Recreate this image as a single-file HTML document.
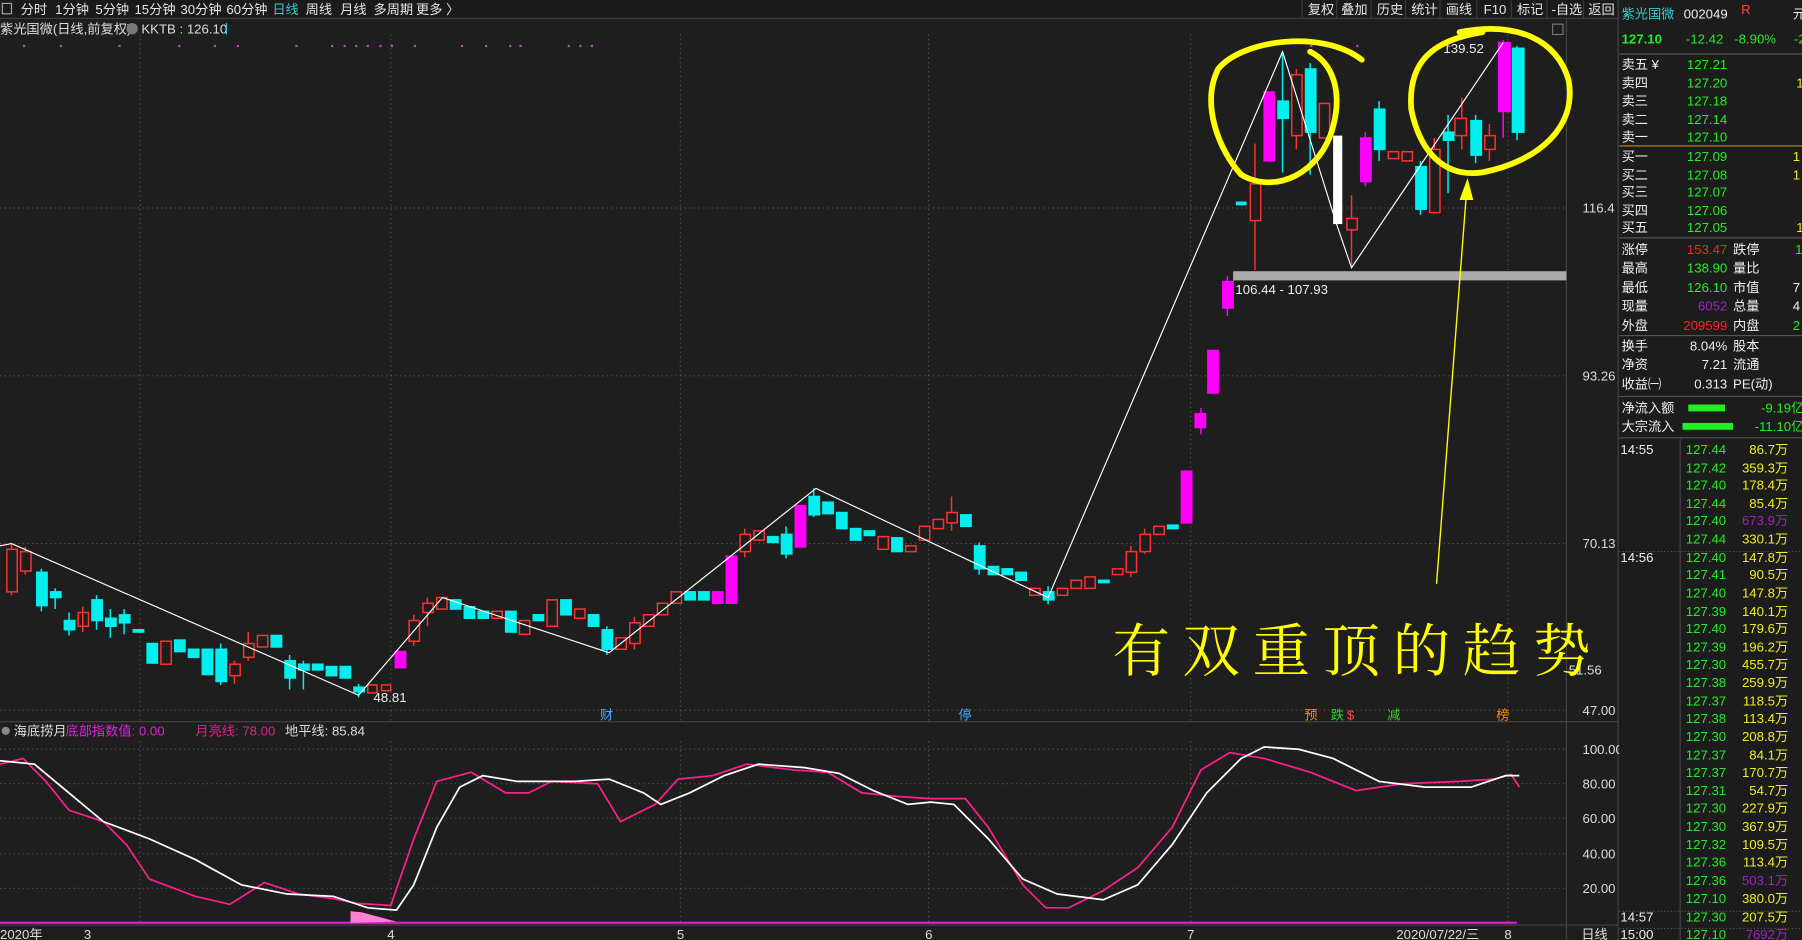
<!DOCTYPE html>
<html><head><meta charset="utf-8"><style>
html,body{margin:0;padding:0;background:#1e1e1e;overflow:hidden}
svg{display:block}
text{font-family:"Liberation Sans","Noto Sans CJK SC",sans-serif;font-size:11.5px}
</style></head><body>
<svg width="1802" height="940" viewBox="0 0 1568 818" preserveAspectRatio="none" xmlns="http://www.w3.org/2000/svg">
<rect width="1568" height="818" fill="#1e1e1e"/>
<!-- top bar -->
<rect x="0" y="0" width="1408" height="16" fill="#1a1a1a"/>
<line x1="0" y1="16" x2="1408" y2="16" stroke="#3a3a3a"/>
<rect x="2" y="3" width="8" height="9" fill="none" stroke="#aaa"/>
<g fill="#e6e6e6">
<text x="18" y="12">分时</text><text x="48" y="12">1分钟</text><text x="83" y="12">5分钟</text><text x="117" y="12">15分钟</text><text x="157" y="12">30分钟</text><text x="197" y="12">60分钟</text>
<text x="237" y="12" fill="#3cc">日线</text><text x="266" y="12">周线</text><text x="296" y="12">月线</text><text x="325" y="12">多周期</text><text x="362" y="12">更多 〉</text>
<text x="1138" y="12">复权</text><text x="1167" y="12">叠加</text><text x="1198" y="12">历史</text><text x="1228" y="12">统计</text><text x="1258" y="12">画线</text><text x="1291" y="12">F10</text><text x="1320" y="12">标记</text><text x="1350" y="12">-自选</text><text x="1382" y="12">返回</text>
</g>
<g stroke="#3a3a3a"><line x1="1133" y1="0" x2="1133" y2="16"/><line x1="1163" y1="0" x2="1163" y2="16"/><line x1="1193" y1="0" x2="1193" y2="16"/><line x1="1223" y1="0" x2="1223" y2="16"/><line x1="1253" y1="0" x2="1253" y2="16"/><line x1="1285" y1="0" x2="1285" y2="16"/><line x1="1315" y1="0" x2="1315" y2="16"/><line x1="1346" y1="0" x2="1346" y2="16"/><line x1="1378" y1="0" x2="1378" y2="16"/></g>
<text x="0" y="29" fill="#ddd">紫光国微(日线,前复权)</text>
<circle cx="115" cy="25" r="5" fill="#777"/>
<text x="123" y="29" fill="#ddd">KKTB : 126.10</text>
<line x1="197" y1="20" x2="197" y2="30" stroke="#3cc"/>
<g fill="#c040c0"><rect x="20" y="39" width="2" height="2"/><rect x="52" y="39" width="2" height="2"/><rect x="103" y="39" width="2" height="2"/><rect x="155" y="39" width="2" height="2"/><rect x="186" y="39" width="2" height="2"/><rect x="206" y="39" width="2" height="2"/><rect x="257" y="39" width="2" height="2"/><rect x="288" y="39" width="2" height="2"/><rect x="299" y="39" width="2" height="2"/><rect x="309" y="39" width="2" height="2"/><rect x="319" y="39" width="2" height="2"/><rect x="330" y="39" width="2" height="2"/><rect x="340" y="39" width="2" height="2"/><rect x="360" y="39" width="2" height="2"/><rect x="401" y="39" width="2" height="2"/><rect x="422" y="39" width="2" height="2"/><rect x="443" y="39" width="2" height="2"/><rect x="452" y="39" width="2" height="2"/><rect x="494" y="39" width="2" height="2"/><rect x="504" y="39" width="2" height="2"/><rect x="514" y="39" width="2" height="2"/><rect x="1140" y="39" width="2" height="2"/><rect x="1180" y="39" width="2" height="2"/><rect x="1260" y="39" width="2" height="2"/></g>
<!-- grid -->
<g stroke="#555" stroke-dasharray="1,3">
<line x1="0" y1="181" x2="1363" y2="181"/><line x1="0" y1="327" x2="1363" y2="327"/><line x1="0" y1="473" x2="1363" y2="473"/><line x1="0" y1="618" x2="1363" y2="618"/>
<line x1="122" y1="30" x2="122" y2="628"/><line x1="340" y1="30" x2="340" y2="628"/><line x1="592" y1="30" x2="592" y2="628"/><line x1="808" y1="30" x2="808" y2="628"/><line x1="1036" y1="30" x2="1036" y2="628"/><line x1="1312" y1="30" x2="1312" y2="628"/>
<line x1="0" y1="652" x2="1363" y2="652"/><line x1="0" y1="682" x2="1363" y2="682"/><line x1="0" y1="712" x2="1363" y2="712"/><line x1="0" y1="743" x2="1363" y2="743"/><line x1="0" y1="773" x2="1363" y2="773"/>
<line x1="122" y1="645" x2="122" y2="805"/><line x1="340" y1="645" x2="340" y2="805"/><line x1="592" y1="645" x2="592" y2="805"/><line x1="808" y1="645" x2="808" y2="805"/><line x1="1036" y1="645" x2="1036" y2="805"/><line x1="1312" y1="645" x2="1312" y2="805"/>
</g>
<line x1="1363" y1="16" x2="1363" y2="818" stroke="#444"/>
<line x1="0" y1="628" x2="1408" y2="628" stroke="#444"/>
<line x1="0" y1="805" x2="1408" y2="805" stroke="#444"/>
<line x1="1408" y1="0" x2="1408" y2="818" stroke="#444"/>
<rect x="1351" y="21" width="9" height="9" fill="none" stroke="#777"/>
<g fill="#ddd"><text x="1377" y="185">116.4</text><text x="1377" y="331">93.26</text><text x="1377" y="477">70.13</text><text x="1365" y="587">51.56</text><text x="1377" y="622">47.00</text>
<text x="1377" y="656">100.00</text><text x="1377" y="686">80.00</text><text x="1377" y="716">60.00</text><text x="1377" y="747">40.00</text><text x="1377" y="777">20.00</text></g>
<!-- candles -->
<g id="c" stroke-width="1.3">
<g stroke="#ff3030" fill="#1e1e1e">
<line x1="10" y1="473" x2="10" y2="518"/><rect x="6" y="478" width="9" height="37"/>
<line x1="22" y1="476" x2="22" y2="500"/><rect x="18" y="480" width="9" height="17"/>
<rect x="68" y="533" width="9" height="12"/><line x1="72" y1="528" x2="72" y2="550"/>
<rect x="140" y="558" width="9" height="20"/>
<line x1="204" y1="575" x2="204" y2="595"/><rect x="200" y="578" width="9" height="10"/>
<line x1="216" y1="550" x2="216" y2="575"/><rect x="212" y="560" width="9" height="12"/>
<rect x="224" y="553" width="9" height="10"/>
<rect x="320" y="596" width="8" height="7"/><rect x="332" y="596" width="8" height="5"/>
<line x1="360" y1="535" x2="360" y2="562"/><rect x="356" y="540" width="9" height="18"/>
<line x1="372" y1="520" x2="372" y2="545"/><rect x="368" y="525" width="9" height="8"/>
<rect x="380" y="520" width="9" height="10"/>
<rect x="428" y="532" width="9" height="6"/><rect x="452" y="540" width="9" height="12"/>
<rect x="476" y="522" width="9" height="23"/><rect x="500" y="530" width="9" height="8"/>
<rect x="536" y="555" width="9" height="10"/><line x1="552" y1="537" x2="552" y2="565"/><rect x="548" y="542" width="9" height="18"/>
<rect x="560" y="535" width="9" height="10"/><rect x="572" y="525" width="9" height="10"/><rect x="584" y="515" width="9" height="10"/>
<line x1="648" y1="460" x2="648" y2="485"/><rect x="644" y="465" width="9" height="15"/><rect x="656" y="462" width="9" height="8"/>
<rect x="764" y="467" width="9" height="11"/><rect x="788" y="475" width="9" height="5"/>
<rect x="800" y="458" width="9" height="12"/><rect x="812" y="452" width="9" height="8"/>
<line x1="828" y1="432" x2="828" y2="462"/><rect x="824" y="446" width="9" height="9"/>
<rect x="896" y="512" width="9" height="6"/><rect x="920" y="512" width="9" height="6"/><rect x="932" y="505" width="9" height="7"/><rect x="944" y="502" width="9" height="10"/>
<rect x="968" y="495" width="9" height="5"/><line x1="984" y1="475" x2="984" y2="502"/><rect x="980" y="480" width="9" height="18"/>
<line x1="996" y1="460" x2="996" y2="482"/><rect x="992" y="465" width="9" height="15"/><rect x="1004" y="458" width="9" height="7"/>
<line x1="1092" y1="125" x2="1092" y2="235"/><rect x="1088" y="160" width="9" height="32"/>
<line x1="1128" y1="60" x2="1128" y2="130"/><rect x="1124" y="65" width="9" height="53"/>
<rect x="1148" y="90" width="9" height="30"/>
<line x1="1176" y1="170" x2="1176" y2="232"/><rect x="1172" y="190" width="9" height="10"/>
<rect x="1208" y="132" width="9" height="6"/><rect x="1220" y="132" width="9" height="8"/>
<line x1="1248" y1="120" x2="1248" y2="186"/><rect x="1244" y="130" width="9" height="55"/>
<line x1="1272" y1="85" x2="1272" y2="130"/><rect x="1266" y="103" width="10" height="15"/>
<line x1="1296" y1="108" x2="1296" y2="140"/><rect x="1292" y="118" width="9" height="12"/>
</g>
<g stroke="#00f0f0" fill="#00f0f0">
<line x1="36" y1="495" x2="36" y2="532"/><rect x="32" y="498" width="9" height="29"/>
<line x1="48" y1="512" x2="48" y2="530"/><rect x="44" y="515" width="9" height="5"/>
<line x1="60" y1="533" x2="60" y2="553"/><rect x="56" y="540" width="9" height="8"/>
<line x1="84" y1="518" x2="84" y2="548"/><rect x="80" y="522" width="9" height="18"/>
<line x1="96" y1="530" x2="96" y2="555"/><rect x="92" y="538" width="9" height="7"/>
<line x1="108" y1="530" x2="108" y2="552"/><rect x="104" y="535" width="9" height="7"/>
<rect x="116" y="548" width="9" height="2"/>
<rect x="128" y="560" width="9" height="17"/><rect x="152" y="557" width="9" height="10"/><rect x="164" y="565" width="9" height="7"/>
<rect x="176" y="565" width="9" height="22"/><line x1="192" y1="560" x2="192" y2="596"/><rect x="188" y="565" width="9" height="28"/>
<rect x="236" y="553" width="9" height="10"/><line x1="252" y1="570" x2="252" y2="600"/><rect x="248" y="575" width="9" height="15"/>
<line x1="264" y1="575" x2="264" y2="600"/><rect x="260" y="578" width="9" height="5"/><rect x="272" y="578" width="9" height="5"/><rect x="284" y="580" width="9" height="8"/><rect x="296" y="580" width="9" height="10"/>
<line x1="312" y1="595" x2="312" y2="607"/><rect x="308" y="598" width="9" height="4"/>
<rect x="392" y="522" width="9" height="8"/><rect x="404" y="528" width="9" height="10"/><rect x="416" y="532" width="9" height="6"/>
<rect x="440" y="532" width="9" height="18"/><rect x="464" y="535" width="9" height="5"/><rect x="488" y="522" width="9" height="13"/>
<rect x="512" y="535" width="9" height="10"/><line x1="528" y1="545" x2="528" y2="570"/><rect x="524" y="548" width="9" height="17"/>
<rect x="596" y="515" width="9" height="7"/><rect x="608" y="515" width="9" height="7"/>
<rect x="668" y="467" width="9" height="5"/><line x1="684" y1="458" x2="684" y2="486"/><rect x="680" y="465" width="9" height="17"/>
<line x1="708" y1="425" x2="708" y2="450"/><rect x="704" y="432" width="9" height="16"/><rect x="716" y="437" width="9" height="10"/><rect x="728" y="446" width="9" height="14"/>
<rect x="740" y="460" width="9" height="10"/><rect x="752" y="462" width="9" height="4"/><rect x="776" y="468" width="9" height="12"/>
<rect x="836" y="448" width="9" height="10"/><line x1="852" y1="472" x2="852" y2="500"/><rect x="848" y="475" width="9" height="20"/>
<rect x="860" y="493" width="9" height="7"/><rect x="872" y="495" width="9" height="5"/><rect x="884" y="498" width="9" height="7"/>
<line x1="912" y1="510" x2="912" y2="526"/><rect x="908" y="515" width="9" height="7"/><rect x="956" y="505" width="9" height="2"/><rect x="1016" y="457" width="9" height="3"/>
<rect x="1076" y="176" width="8" height="2"/>
<line x1="1116" y1="45" x2="1116" y2="150"/><rect x="1112" y="88" width="9" height="15"/>
<line x1="1140" y1="55" x2="1140" y2="152"/><rect x="1136" y="60" width="9" height="55"/>
<line x1="1200" y1="88" x2="1200" y2="140"/><rect x="1196" y="95" width="9" height="35"/>
<line x1="1236" y1="140" x2="1236" y2="187"/><rect x="1232" y="145" width="9" height="37"/>
<line x1="1260" y1="100" x2="1260" y2="168"/><rect x="1256" y="115" width="9" height="7"/>
<line x1="1284" y1="100" x2="1284" y2="142"/><rect x="1280" y="105" width="9" height="30"/>
<line x1="1320" y1="40" x2="1320" y2="122"/><rect x="1316" y="42" width="10" height="73"/>
</g>
<g stroke="#ff00ff" fill="#ff00ff">
<rect x="344" y="567" width="9" height="14"/><rect x="620" y="515" width="9" height="10"/><rect x="632" y="484" width="9" height="41"/>
<rect x="692" y="440" width="9" height="36"/><rect x="1028" y="410" width="9" height="45"/>
<line x1="1045" y1="355" x2="1045" y2="378"/><rect x="1040" y="360" width="9" height="12"/>
<rect x="1051" y="305" width="9" height="37"/><line x1="1068" y1="240" x2="1068" y2="275"/><rect x="1064" y="245" width="9" height="23"/>
<rect x="1100" y="80" width="9" height="60"/><line x1="1188" y1="115" x2="1188" y2="162"/><rect x="1184" y="120" width="9" height="38"/>
<line x1="1308" y1="35" x2="1308" y2="120"/><rect x="1304" y="37" width="10" height="60"/>
</g>
<rect x="1160" y="118" width="8" height="77" fill="#fff"/>
</g>
<!-- trend lines -->
<polyline fill="none" stroke="#fff" stroke-width="1" points="0,475 10,473 312,605 385,520 530,568 710,425 912,520 1116,45 1163,195 1176,233 1308,37"/>
<rect x="1073" y="236" width="290" height="8" fill="#aaa"/>
<g fill="#eee"><text x="1075" y="256" font-size="11">106.44 - 107.93</text><text x="1256" y="46" font-size="11">139.52</text><text x="325" y="611" font-size="11">48.81</text></g>
<g font-size="11"><text x="1135" y="626" fill="#f80">预</text><text x="1158" y="626" fill="#3c3">跌</text><text x="1172" y="626" fill="#f44" font-size="8">$</text><text x="1207" y="626" fill="#3c3">减</text><text x="1302" y="626" fill="#f80">榜</text><text x="522" y="626" fill="#4af">财</text><text x="834" y="626" fill="#4af">停</text></g>
<!-- yellow annotations -->
<path d="M1185,52 C1150,25 1080,35 1060,60 C1045,90 1060,130 1080,152 C1110,170 1150,150 1160,110 C1168,80 1160,55 1140,45" fill="none" stroke="#ffff00" stroke-width="5" stroke-linecap="round"/>
<path d="M1270,28 C1320,18 1355,35 1365,70 C1372,110 1340,140 1290,150 C1255,155 1235,130 1228,95 C1225,55 1245,35 1290,28" fill="none" stroke="#ffff00" stroke-width="5" stroke-linecap="round"/>
<line x1="1250" y1="508" x2="1276" y2="168" stroke="#ffff00" stroke-width="1.2"/>
<polygon points="1277,155 1270,174 1282,174" fill="#ffff00"/>
<text x="968" y="584" fill="#ffff00" font-size="50" letter-spacing="11" style="font-family:'Noto Serif CJK SC',serif;font-size:50px">有双重顶的趋势</text>
<!-- indicator -->
<g font-size="10.5"><text x="12" y="640" fill="#ddd">海底捞月</text><text x="57" y="640" fill="#e020e0">底部指数值: 0.00</text><text x="170" y="640" fill="#e0208a">月亮线: 78.00</text><text x="248" y="640" fill="#ddd">地平线: 85.84</text></g>
<circle cx="5" cy="636" r="3.5" fill="#888"/>
<polyline fill="none" stroke="#ff1e8c" stroke-width="1.5" points="0,665 20,660 40,680 60,705 90,715 110,735 130,765 170,780 200,787 230,768 260,778 290,782 310,786 340,788 360,730 380,680 410,672 440,690 460,690 480,680 520,682 540,715 570,700 590,678 620,675 650,665 690,670 720,672 750,690 780,693 810,695 840,695 860,720 890,770 910,790 930,790 960,775 990,755 1020,720 1045,670 1070,655 1100,660 1140,672 1180,688 1220,682 1270,680 1300,678 1315,674 1322,685"/>
<polyline fill="none" stroke="#fff" stroke-width="1.5" points="0,662 30,665 60,690 90,715 130,730 170,748 210,770 250,778 290,780 320,790 345,792 360,770 380,720 400,685 420,675 450,680 500,680 530,678 560,690 575,700 600,690 630,675 660,665 700,668 730,673 760,688 790,700 810,698 830,700 860,730 890,765 920,778 960,783 990,770 1020,735 1050,690 1080,660 1100,650 1130,652 1160,660 1200,680 1240,685 1280,685 1310,675 1322,675"/>
<line x1="0" y1="803" x2="1320" y2="803" stroke="#d020d0" stroke-width="2"/>
<path d="M305,803 L305,793 L315,794 L330,798 L345,802 Z" fill="#ff80d0"/>
<g fill="#ddd" font-size="10.5"><text x="0" y="817">2020年</text><text x="73" y="817">3</text><text x="337" y="817">4</text><text x="589" y="817">5</text><text x="805" y="817">6</text><text x="1033" y="817">7</text><text x="1215" y="817">2020/07/22/三</text><text x="1309" y="817">8</text><text x="1376" y="817">日线</text></g>
<!-- right panel -->
<rect x="1409" y="0" width="159" height="818" fill="#1c1c1c"/>
<text x="1411" y="16" fill="#3cc" font-size="13">紫光国微</text><text x="1465" y="16" fill="#eee" font-size="13">002049</text><text x="1515" y="12" fill="#f44" font-size="8">R</text><text x="1560" y="16" fill="#eee" font-size="13">元</text>
<text x="1411" y="38" fill="#22ee22" font-size="15" font-weight="bold">127.10</text><text x="1467" y="38" fill="#22ee22" font-size="13">-12.42</text><text x="1509" y="38" fill="#22ee22" font-size="13">-8.90%</text><text x="1561" y="38" fill="#22ee22" font-size="13">-2</text>
<g stroke="#555"><line x1="1409" y1="47" x2="1568" y2="47"/><line x1="1409" y1="207" x2="1568" y2="207"/><line x1="1409" y1="292" x2="1568" y2="292"/><line x1="1409" y1="345" x2="1568" y2="345"/><line x1="1409" y1="381" x2="1568" y2="381"/></g>
<line x1="1409" y1="127" x2="1568" y2="127" stroke="#c80"/>
<g fill="#eee"><text x="1411" y="60">卖五 ¥</text><text x="1411" y="76">卖四</text><text x="1411" y="92">卖三</text><text x="1411" y="108">卖二</text><text x="1411" y="123">卖一</text>
<text x="1411" y="140">买一</text><text x="1411" y="156">买二</text><text x="1411" y="171">买三</text><text x="1411" y="187">买四</text><text x="1411" y="202">买五</text>
<text x="1411" y="221">涨停</text><text x="1411" y="237">最高</text><text x="1411" y="254">最低</text><text x="1411" y="270">现量</text><text x="1411" y="287">外盘</text>
<text x="1508" y="221">跌停</text><text x="1508" y="237">量比</text><text x="1508" y="254">市值</text><text x="1508" y="270">总量</text><text x="1508" y="287">内盘</text>
<text x="1411" y="305">换手</text><text x="1411" y="321">净资</text><text x="1411" y="338">收益㈠</text><text x="1508" y="305">股本</text><text x="1508" y="321">流通</text><text x="1508" y="338">PE(动)</text>
<text x="1411" y="359">净流入额</text><text x="1411" y="375">大宗流入</text></g>
<g fill="#22ee22" text-anchor="end"><text x="1503" y="60">127.21</text><text x="1503" y="76">127.20</text><text x="1503" y="92">127.18</text><text x="1503" y="108">127.14</text><text x="1503" y="123">127.10</text>
<text x="1503" y="140">127.09</text><text x="1503" y="156">127.08</text><text x="1503" y="171">127.07</text><text x="1503" y="187">127.06</text><text x="1503" y="202">127.05</text>
<text x="1503" y="237">138.90</text><text x="1503" y="254">126.10</text><text x="1570" y="359">-9.19亿</text><text x="1570" y="375">-11.10亿</text></g>
<g text-anchor="end"><text x="1503" y="221" fill="#f22">153.47</text><text x="1503" y="270" fill="#a020c0">6052</text><text x="1503" y="287" fill="#f22">209599</text>
<text x="1503" y="305" fill="#eee">8.04%</text><text x="1503" y="321" fill="#eee">7.21</text><text x="1503" y="338" fill="#eee">0.313</text></g>
<g fill="#eee"><text x="1562" y="221" fill="#2e2">1</text><text x="1560" y="254">7</text><text x="1560" y="270">4</text><text x="1560" y="287" fill="#2e2">2</text><text x="1560" y="140" fill="#ee2">1</text><text x="1560" y="156" fill="#ee2">1</text><text x="1563" y="76" fill="#ee2">1</text><text x="1563" y="202" fill="#ee2">1</text></g>
<rect x="1469" y="352" width="32" height="6" fill="#22ee22"/><rect x="1464" y="368" width="44" height="6" fill="#22ee22"/>
<line x1="1462" y1="382" x2="1462" y2="818" stroke="#444"/>
<g fill="#eee"><text x="1410" y="395">14:55</text><text x="1410" y="489">14:56</text><text x="1410" y="802">14:57</text><text x="1410" y="817">15:00</text></g>
<g stroke="#555" stroke-dasharray="1,2"><line x1="1409" y1="480" x2="1568" y2="480"/><line x1="1409" y1="793" x2="1568" y2="793"/><line x1="1409" y1="808" x2="1568" y2="808"/></g>
<g fill="#22ee22" text-anchor="end">
<text x="1502" y="395">127.44</text><text x="1502" y="411">127.42</text><text x="1502" y="426">127.40</text><text x="1502" y="442">127.44</text><text x="1502" y="457">127.40</text><text x="1502" y="473">127.44</text><text x="1502" y="489">127.40</text><text x="1502" y="504">127.41</text><text x="1502" y="520">127.40</text><text x="1502" y="536">127.39</text><text x="1502" y="551">127.40</text><text x="1502" y="567">127.39</text><text x="1502" y="582">127.30</text><text x="1502" y="598">127.38</text><text x="1502" y="614">127.37</text><text x="1502" y="629">127.38</text><text x="1502" y="645">127.30</text><text x="1502" y="661">127.37</text><text x="1502" y="676">127.37</text><text x="1502" y="692">127.31</text><text x="1502" y="707">127.30</text><text x="1502" y="723">127.30</text><text x="1502" y="739">127.32</text><text x="1502" y="754">127.36</text><text x="1502" y="770">127.36</text><text x="1502" y="786">127.10</text><text x="1502" y="802">127.30</text><text x="1502" y="817">127.10</text></g>
<g fill="#eeee22" text-anchor="end">
<text x="1556" y="395">86.7万</text><text x="1556" y="411">359.3万</text><text x="1556" y="426">178.4万</text><text x="1556" y="442">85.4万</text><text x="1556" y="457" fill="#a020c0">673.9万</text><text x="1556" y="473">330.1万</text><text x="1556" y="489">147.8万</text><text x="1556" y="504">90.5万</text><text x="1556" y="520">147.8万</text><text x="1556" y="536">140.1万</text><text x="1556" y="551">179.6万</text><text x="1556" y="567">196.2万</text><text x="1556" y="582">455.7万</text><text x="1556" y="598">259.9万</text><text x="1556" y="614">118.5万</text><text x="1556" y="629">113.4万</text><text x="1556" y="645">208.8万</text><text x="1556" y="661">84.1万</text><text x="1556" y="676">170.7万</text><text x="1556" y="692">54.7万</text><text x="1556" y="707">227.9万</text><text x="1556" y="723">367.9万</text><text x="1556" y="739">109.5万</text><text x="1556" y="754">113.4万</text><text x="1556" y="770" fill="#a020c0">503.1万</text><text x="1556" y="786">380.0万</text><text x="1556" y="802">207.5万</text><text x="1556" y="817" fill="#a020c0">7692万</text></g>
</svg>
</body></html>
